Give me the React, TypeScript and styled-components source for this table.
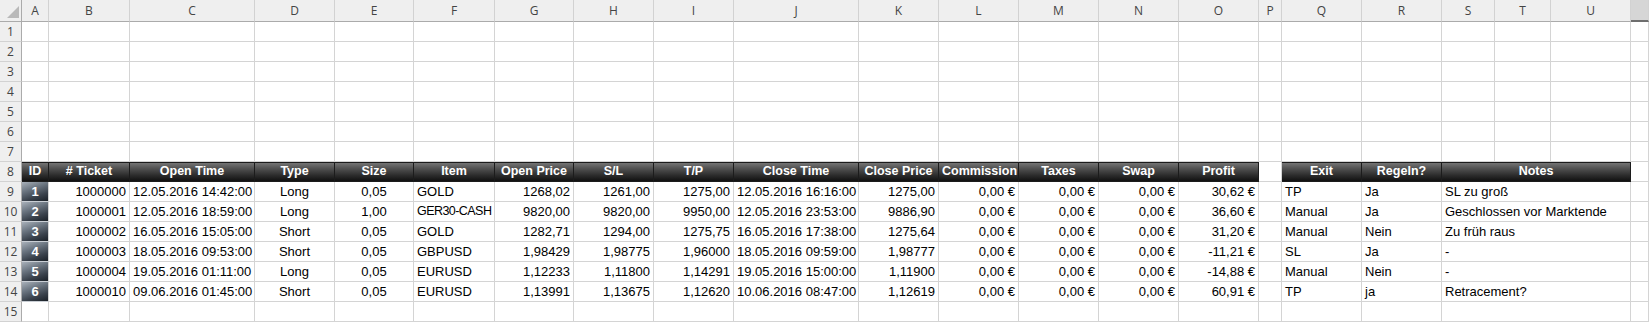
import React from "react";
import styled, { createGlobalStyle, css } from "styled-components";

const GlobalStyle = createGlobalStyle`
  html, body {
    margin: 0;
    padding: 0;
    background: #ffffff;
    overflow: hidden;
  }
`;

const columns: { key: string; width: number }[] = [
  { key: "A", width: 27 },
  { key: "B", width: 81 },
  { key: "C", width: 125 },
  { key: "D", width: 80 },
  { key: "E", width: 79 },
  { key: "F", width: 81 },
  { key: "G", width: 79 },
  { key: "H", width: 80 },
  { key: "I", width: 80 },
  { key: "J", width: 125 },
  { key: "K", width: 80 },
  { key: "L", width: 80 },
  { key: "M", width: 80 },
  { key: "N", width: 80 },
  { key: "O", width: 80 },
  { key: "P", width: 23 },
  { key: "Q", width: 80 },
  { key: "R", width: 80 },
  { key: "S", width: 53 },
  { key: "T", width: 56 },
  { key: "U", width: 80 },
];

type Align = "left" | "center" | "right";

const tradeHeaders: { label: string; align: Align }[] = [
  { label: "ID", align: "center" },
  { label: "# Ticket", align: "right" },
  { label: "Open Time", align: "right" },
  { label: "Type", align: "center" },
  { label: "Size", align: "center" },
  { label: "Item", align: "left" },
  { label: "Open Price", align: "right" },
  { label: "S/L", align: "right" },
  { label: "T/P", align: "right" },
  { label: "Close Time", align: "right" },
  { label: "Close Price", align: "right" },
  { label: "Commission", align: "right" },
  { label: "Taxes", align: "right" },
  { label: "Swap", align: "right" },
  { label: "Profit", align: "right" },
];

const trades = [
  ["1", "1000000", "12.05.2016 14:42:00", "Long", "0,05", "GOLD", "1268,02", "1261,00", "1275,00", "12.05.2016 16:16:00", "1275,00", "0,00 €", "0,00 €", "0,00 €", "30,62 €"],
  ["2", "1000001", "12.05.2016 18:59:00", "Long", "1,00", "GER30-CASH", "9820,00", "9820,00", "9950,00", "12.05.2016 23:53:00", "9886,90", "0,00 €", "0,00 €", "0,00 €", "36,60 €"],
  ["3", "1000002", "16.05.2016 15:05:00", "Short", "0,05", "GOLD", "1282,71", "1294,00", "1275,75", "16.05.2016 17:38:00", "1275,64", "0,00 €", "0,00 €", "0,00 €", "31,20 €"],
  ["4", "1000003", "18.05.2016 09:53:00", "Short", "0,05", "GBPUSD", "1,98429", "1,98775", "1,96000", "18.05.2016 09:59:00", "1,98777", "0,00 €", "0,00 €", "0,00 €", "-11,21 €"],
  ["5", "1000004", "19.05.2016 01:11:00", "Long", "0,05", "EURUSD", "1,12233", "1,11800", "1,14291", "19.05.2016 15:00:00", "1,11900", "0,00 €", "0,00 €", "0,00 €", "-14,88 €"],
  ["6", "1000010", "09.06.2016 01:45:00", "Short", "0,05", "EURUSD", "1,13991", "1,13675", "1,12620", "10.06.2016 08:47:00", "1,12619", "0,00 €", "0,00 €", "0,00 €", "60,91 €"],
];

const reviews = [
  ["TP", "Ja", "SL zu groß"],
  ["Manual", "Ja", "Geschlossen vor Marktende"],
  ["Manual", "Nein", "Zu früh raus"],
  ["SL", "Ja", "-"],
  ["Manual", "Nein", "-"],
  ["TP", "ja", "Retracement?"],
];

const HEADER_ROW = 8;
const ROW_COUNT = 15;

const Sheet = styled.div`
  display: grid;
  grid-template-columns: 22px ${columns.map((c) => `${c.width}px`).join(" ")} 1fr;
  grid-template-rows: 22px repeat(${ROW_COUNT}, 20px);
  width: 100vw;
  font-family: "Liberation Sans", Arial, sans-serif;
`;

const Corner = styled.div`
  position: relative;
  background: #efefef;
  border-right: 1px solid #ababab;
  border-bottom: 1px solid #ababab;

  svg {
    position: absolute;
    right: 2px;
    bottom: 3px;
  }
`;

const ColHeader = styled.div<{ $dim?: boolean }>`
  display: flex;
  align-items: center;
  justify-content: center;
  background: ${(p) => (p.$dim ? "#d6d6d6" : "#efefef")};
  border-right: 1px solid #d2d2d2;
  border-bottom: ${(p) => (p.$dim ? "2px solid #6e6e6e" : "1px solid #ababab")};
  color: #444444;
  font-family: "Open Sans", "Liberation Sans", sans-serif;
  font-size: 12px;
`;

const RowHeader = styled.div`
  display: flex;
  align-items: center;
  justify-content: center;
  background: #efefef;
  border-right: 1px solid #ababab;
  border-bottom: 1px solid #d2d2d2;
  color: #444444;
  font-family: "Open Sans", "Liberation Sans", sans-serif;
  font-size: 12px;
`;

type Variant = "plain" | "head" | "id";

const Cell = styled.div<{
  $align?: Align;
  $variant?: Variant;
  $span?: number;
  $tight?: boolean;
}>`
  box-sizing: border-box;
  grid-column: span ${(p) => p.$span ?? 1};
  padding: 0 3px;
  border-right: 1px solid #d4d4d4;
  border-bottom: 1px solid #d4d4d4;
  font-size: ${(p) => (p.$tight ? "12.5px" : "13px")};
  letter-spacing: ${(p) => (p.$tight ? "-0.55px" : "normal")};
  line-height: 19px;
  color: #000000;
  text-align: ${(p) => p.$align ?? "left"};
  white-space: nowrap;
  overflow: hidden;

  ${(p) =>
    p.$variant === "head" &&
    css`
      background: linear-gradient(
        to bottom,
        #7a7a7a 0%,
        #505050 35%,
        #2c2c2c 70%,
        #111111 100%
      );
      border-right-color: #1c1c1c;
      border-bottom-color: #1c1c1c;
      box-shadow: inset 0 1px 0 #1c1c1c;
      color: #ffffff;
      font-size: 12.5px;
      font-weight: bold;
      text-align: center;
    `}

  ${(p) =>
    p.$variant === "id" &&
    css`
      background: linear-gradient(
        160deg,
        #a9b1ba 0%,
        #6d7782 35%,
        #3a424c 70%,
        #1a2027 100%
      );
      border-bottom-color: #c9ced4;
      color: #ffffff;
      font-weight: bold;
      text-align: center;
    `}
`;

const CornerMark = () => (
  <svg width="12" height="12" viewBox="0 0 12 12">
    <polygon points="12,0 12,12 0,12" fill="#b9b9b9" />
  </svg>
);

// S:U are merged from the table header down
const emptyCells = (row: number) => {
  const merged = row >= HEADER_ROW;
  const cells: React.ReactNode[] = [];
  columns.forEach((c) => {
    if (merged && (c.key === "T" || c.key === "U")) return;
    cells.push(<Cell key={c.key} $span={merged && c.key === "S" ? 3 : 1} />);
  });
  return cells;
};

const HeaderRow = () => (
  <>
    {tradeHeaders.map((h) => (
      <Cell key={h.label} $variant="head">
        {h.label}
      </Cell>
    ))}
    <Cell />
    <Cell $variant="head">Exit</Cell>
    <Cell $variant="head">Regeln?</Cell>
    <Cell $variant="head" $span={3}>
      Notes
    </Cell>
  </>
);

const TradeRow = ({ index }: { index: number }) => (
  <>
    {trades[index].map((value, i) => (
      <Cell
        key={i}
        $variant={i === 0 ? "id" : "plain"}
        $align={tradeHeaders[i].align}
        $tight={value.length > 8 && tradeHeaders[i].align === "left"}
      >
        {value}
      </Cell>
    ))}
    <Cell />
    <Cell>{reviews[index][0]}</Cell>
    <Cell>{reviews[index][1]}</Cell>
    <Cell $span={3}>{reviews[index][2]}</Cell>
  </>
);

export default function App() {
  const rows = Array.from({ length: ROW_COUNT }, (_, i) => i + 1);

  return (
    <>
      <GlobalStyle />
      <Sheet>
        <Corner>
          <CornerMark />
        </Corner>
        {columns.map((c) => (
          <ColHeader key={c.key}>{c.key}</ColHeader>
        ))}
        <ColHeader $dim />

        {rows.map((row) => {
          const tradeIndex = row - HEADER_ROW - 1;
          return (
            <React.Fragment key={row}>
              <RowHeader>{row}</RowHeader>
              {row === HEADER_ROW ? (
                <HeaderRow />
              ) : tradeIndex >= 0 && tradeIndex < trades.length ? (
                <TradeRow index={tradeIndex} />
              ) : (
                emptyCells(row)
              )}
              <Cell />
            </React.Fragment>
          );
        })}
      </Sheet>
    </>
  );
}
